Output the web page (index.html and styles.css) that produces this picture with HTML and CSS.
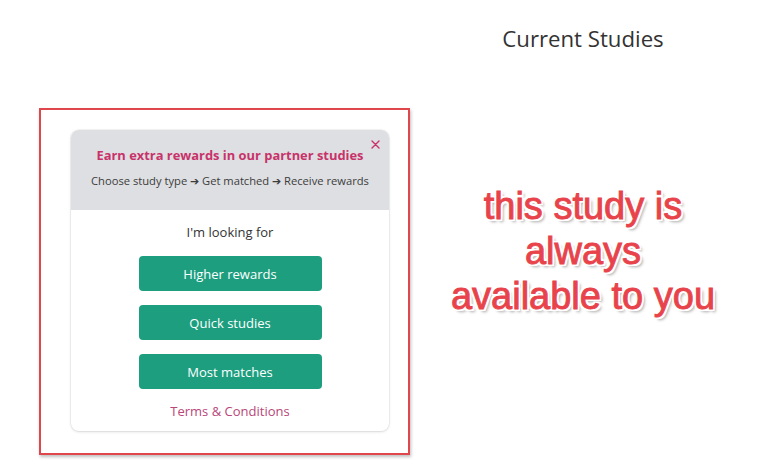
FILE: index.html
```html
<!DOCTYPE html>
<html lang="en">
<head>
<meta charset="utf-8">
<title>Current Studies</title>
<link rel="stylesheet" href="styles.css">
</head>
<body>
<div class="page">
  <div class="left">
    <div class="highlight">
      <div class="card">
        <div class="card-head">
          <button class="close" aria-label="Close">
            <svg width="9" height="9" viewBox="0 0 9 9"><path d="M1 1L8 8M8 1L1 8" stroke="#c8326a" stroke-width="1.4" stroke-linecap="round"/></svg>
          </button>
          <div class="title">Earn extra rewards in our partner studies</div>
          <div class="steps">Choose study type ➔ Get matched ➔ Receive rewards</div>
        </div>
        <div class="card-body">
          <div class="looking">I'm looking for</div>
          <button class="choice">Higher rewards</button>
          <button class="choice">Quick studies</button>
          <button class="choice">Most matches</button>
          <a class="terms" href="#">Terms &amp; Conditions</a>
        </div>
      </div>
    </div>
  </div>
  <div class="right">
    <h1 class="heading">Current Studies</h1>
    <p class="note">this study is<br>always<br>available to you</p>
  </div>
</div>
</body>
</html>
```

FILE: styles.css
```css
* { box-sizing: border-box; }
html, body { margin: 0; padding: 0; background: #fff; }
body { font-family: "Open Sans", "Noto Sans", sans-serif; color: #333; }

.page {
  display: grid;
  grid-template-columns: 420px 326px;
  width: 768px;
  height: 475px;
}

.left { padding: 108px 0 0 39px; }

.highlight {
  width: 371px;
  border: 2px solid #e0474c;
  box-shadow: 1px 2px 3px rgba(0,0,0,0.25);
  padding: 20px 19px 22px 30px;
}

.card {
  width: 318px;
  border-radius: 8px;
  background: #fff;
  box-shadow: 0 1px 3px rgba(0,0,0,0.12), 0 0 0 1px rgba(0,0,0,0.04);
  overflow: hidden;
}

.card-head {
  position: relative;
  background: #dedfe2;
  height: 80px;
  padding-top: 15px;
  text-align: center;
}

.close {
  position: absolute;
  top: 10px;
  right: 9px;
  border: 0;
  background: none;
  padding: 0;
  width: 9px;
  height: 9px;
  line-height: 0;
}

.title {
  font-weight: 700;
  font-size: 12.9px;
  line-height: 20px;
  color: #c8326a;
}

.steps {
  margin-top: 8px;
  font-size: 11.2px;
  line-height: 16px;
  color: #3c3c3c;
}

.card-body {
  display: flex;
  flex-direction: column;
  align-items: center;
  padding: 12px 0 10px;
}

.looking {
  font-size: 13px;
  line-height: 20px;
  color: #333;
  margin-bottom: 14px;
}

.choice {
  width: 183px;
  height: 35px;
  border: 0;
  border-radius: 4px;
  background: #1c9e7f;
  color: #fff;
  font-family: "Open Sans", "Noto Sans", sans-serif;
  font-size: 13px;
  margin-bottom: 14px;
}

.choice:last-of-type { margin-bottom: 12px; }

.terms {
  font-size: 13px;
  line-height: 20px;
  color: #b8467a;
  text-decoration: none;
}

.right {
  display: flex;
  flex-direction: column;
  align-items: center;
}

.heading {
  margin: 24px 0 0;
  font-weight: 400;
  font-size: 22.2px;
  line-height: 30px;
  color: #333;
}

.note {
  margin: 130px 0 0;
  font-family: "Liberation Sans", Arial, sans-serif;
  font-size: 38px;
  line-height: 45px;
  text-align: center;
  color: #e8434b;
  -webkit-text-stroke: 0.9px #e8434b;
  text-shadow:
    1px 0 0 #fff, -1px 0 0 #fff, 0 1px 0 #fff, 0 -1px 0 #fff,
    2px 0 0 #fff, -2px 0 0 #fff, 0 2px 0 #fff, 0 -2px 0 #fff,
    1px 1px 0 #fff, -1px -1px 0 #fff, 1px -1px 0 #fff, -1px 1px 0 #fff,
    2px 2px 0 #fff, -2px -2px 0 #fff, 2px -2px 0 #fff, -2px 2px 0 #fff,
    3px 3px 3px rgba(0,0,0,0.35);
}
```
